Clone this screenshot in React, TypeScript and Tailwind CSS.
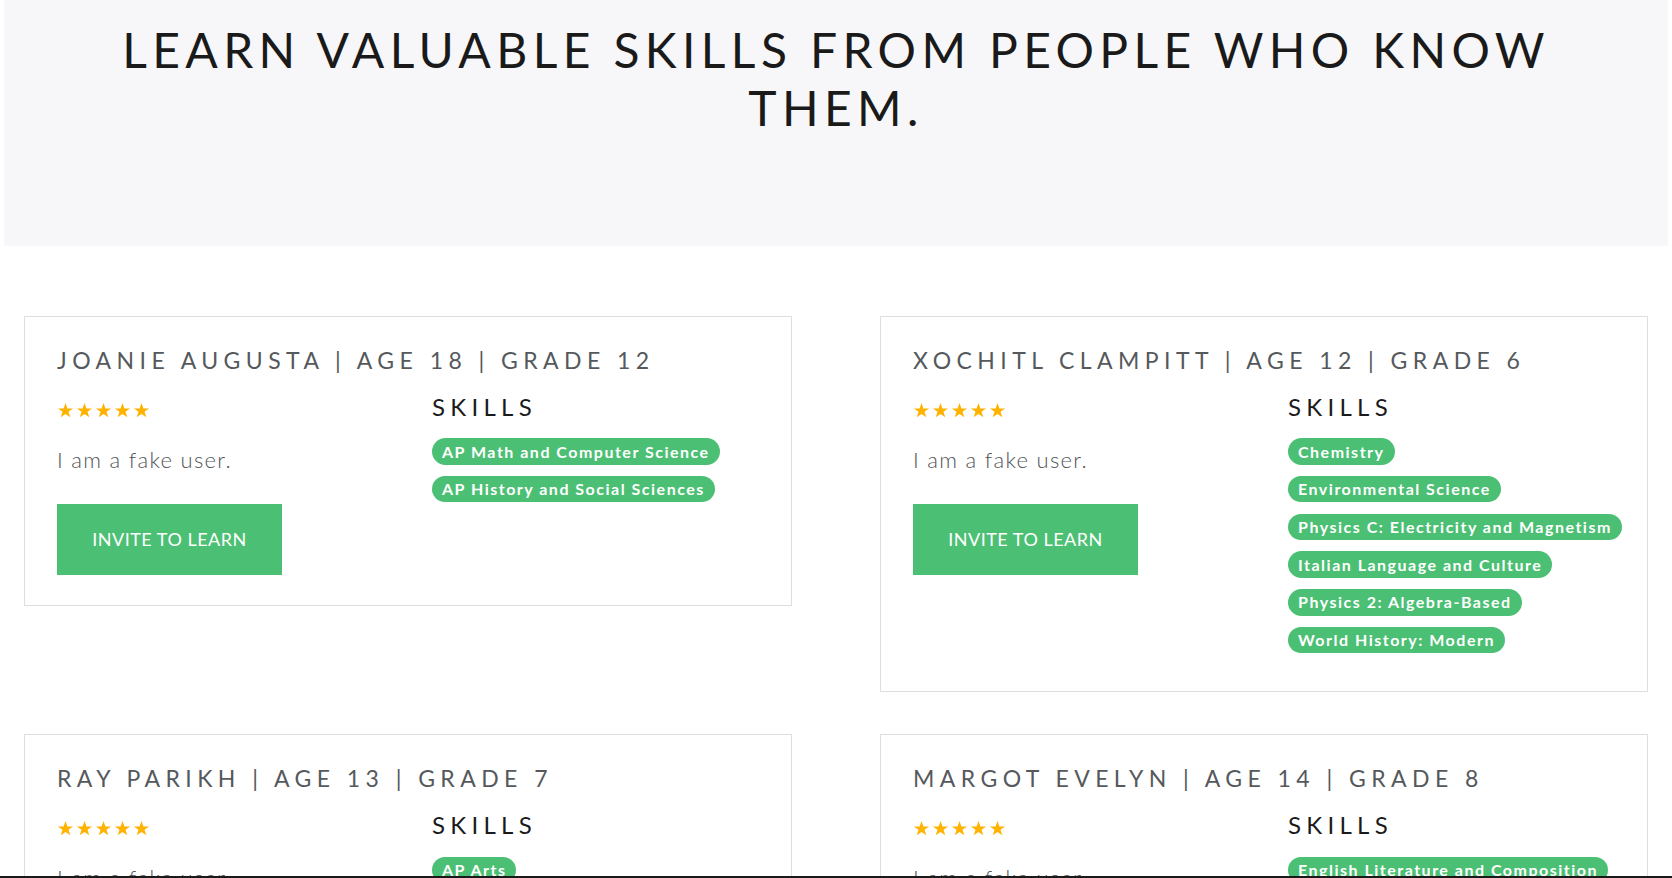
import { Fragment } from "react";

const TUTORS = [
  {
    id: 1,
    name: "Joanie Augusta",
    age: 18,
    grade: 12,
    bio: "I am a fake user.",
    skills: ["AP Math and Computer Science", "AP History and Social Sciences"],
  },
  {
    id: 2,
    name: "Xochitl Clampitt",
    age: 12,
    grade: 6,
    bio: "I am a fake user.",
    skills: [
      "Chemistry",
      "Environmental Science",
      "Physics C: Electricity and Magnetism",
      "Italian Language and Culture",
      "Physics 2: Algebra-Based",
      "World History: Modern",
    ],
  },
  {
    id: 3,
    name: "Ray Parikh",
    age: 13,
    grade: 7,
    bio: "I am a fake user.",
    skills: ["AP Arts"],
  },
  {
    id: 4,
    name: "Margot Evelyn",
    age: 14,
    grade: 8,
    bio: "I am a fake user.",
    skills: ["English Literature and Composition"],
  },
];

function Star() {
  return (
    <svg width="17" height="15" viewBox="0 0 24 22" className="block">
      <path
        d="M12 0l2.83 7.9H23.2l-6.78 4.92 2.6 8.18L12 16.1 4.98 21l2.6-8.18L.8 7.9h8.37z"
        fill="#ffb300"
      />
    </svg>
  );
}

function TutorCard({ tutor }: { tutor: (typeof TUTORS)[number] }) {
  return (
    <div className="border border-[#dedede] bg-white px-8 pt-[30px] pb-[30px]">
      <h4 className="text-[23px] leading-[1.2] uppercase tracking-[0.236em] text-[#55595c]">
        {tutor.name} | Age {tutor.age} | Grade {tutor.grade}
      </h4>

      <div className="mt-[18px] grid grid-cols-[375px_minmax(0,1fr)]">
        <div className="flex flex-col items-start">
          <div className="mt-[10px] flex gap-[2px]">
            {[0, 1, 2, 3, 4].map((i) => (
              <Fragment key={i}>
                <Star />
              </Fragment>
            ))}
          </div>
          <p className="mt-[27px] text-[22px] leading-[30px] font-light tracking-[1.3px] text-[#505457]">
            {tutor.bio}
          </p>
          <button className="mt-[29px] w-[225px] h-[71px] bg-[#4bbf73] text-white text-[18px] uppercase tracking-[0.5px]">
            Invite to learn
          </button>
        </div>

        <div className="flex flex-col items-start pb-[8px]">
          <h3 className="text-[24px] leading-[1.2] uppercase tracking-[0.22em] text-[#1a1a1a]">
            Skills
          </h3>
          <div className="mt-[17px] flex flex-col items-start gap-[11.3px]">
            {tutor.skills.map((skill) => (
              <span
                key={skill}
                className="h-[26.4px] flex items-center whitespace-nowrap rounded-full bg-[#4bbf73] px-[10px] text-[16px] font-bold tracking-[1.5px] text-white"
              >
                {skill}
              </span>
            ))}
          </div>
        </div>
      </div>
    </div>
  );
}

export default function App() {
  return (
    <div className="min-h-screen bg-white font-['Lato','Noto_Sans',sans-serif]">
      <header className="mx-1 h-[246px] bg-[#f7f7f9] px-[90px] pt-[21px] text-center">
        <h1 className="text-[48px] leading-[1.2] uppercase tracking-[0.112em] text-[#1a1a1a]">
          Learn valuable skills from people who know them.
        </h1>
      </header>

      <div className="grid grid-cols-2 items-start gap-x-[88px] gap-y-[42px] px-6 pt-[70px] pb-16">
        {TUTORS.map((t) => (
          <TutorCard key={t.id} tutor={t} />
        ))}
      </div>

      <div className="fixed bottom-0 left-0 right-0 h-[2px] bg-[#1a1a1a]" />
    </div>
  );
}
